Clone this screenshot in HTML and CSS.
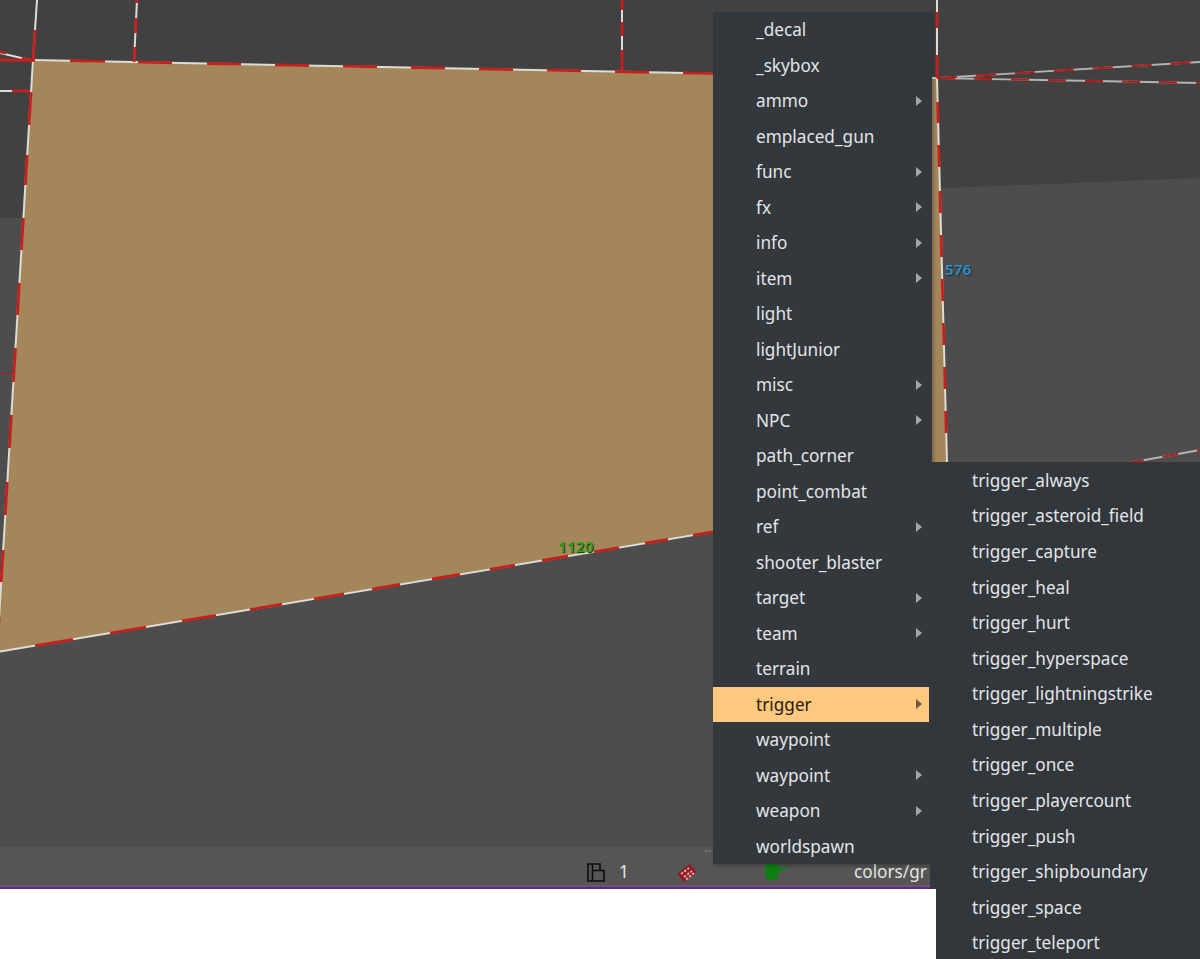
FILE: index.html
```html
<!DOCTYPE html>
<html lang="en">
<head>
<meta charset="utf-8">
<title>Entity menu</title>
<link rel="stylesheet" href="styles.css">
</head>
<body>
<div class="app">
  <div class="viewport">
    <svg class="map" width="1200" height="847" viewBox="0 0 1200 847">
      <rect class="far" width="1200" height="847"/>
      <polygon class="near" points="0,218 25,218 943,188 1200,178 1200,847 0,847"/>
      <polygon class="floor" points="33,60 937,78 947,491 0,651.6 -3,651"/>

      <g class="edge">
        <path d="M33 60L937 78"/>
        <path d="M33 60L-3 651"/>
        <path d="M0 651.6L713 531.8"/>
        <path d="M937 78L947 463"/>
        <path d="M37 0L33 60"/>
        <path d="M137 0L134 62"/>
        <path d="M622 0L622 72"/>
        <path d="M937 0L937 78"/>
        <path d="M0 53L30 60"/>
        <path d="M0 91L30 91"/>
      </g>
      <g class="edge red">
        <path d="M35 60.4L0 60"/>
        <path d="M70 60.7L105 61.4M138 62.1L172 62.8M207 63.5L241 64.1M275 64.8L309 65.5M343 66.2L377 66.8M411 67.5L445 68.2M479 68.9L513 69.6M547 70.2L581 70.9M615 71.6L649 72.3M683 72.9L717 73.6"/>
        <path d="M31.05 92L29.04 125M27.2 155L25.4 185M23.4 218L21.4 250M19.4 283L17.5 315M15.5 348L13.4 382M11.4 415L9.4 448M7.3 482L5.3 515M3.2 550L1.2 582M-.9 617L-2 640"/>
        <path d="M35 645.7L73 639.3M110 633.1L146 627.1M182 621L216 615.3M250 609.6L282 604.2M314 598.8L344 593.8M372 589.1L400 584.4M432 579L460 574.3M490 569.3L515 565.1M542 560.5L568 556.2M594 551.8L619 547.6M645 543.2L668 539.4M693 535.2L713 531.8"/>
        <path d="M937.6 102L938.2 123M938.7 145L939.3 167M939.9 191L940.5 213M941.1 235L941.6 257M942.2 279L942.8 301M943.4 323L943.9 345M944.5 367L945.1 389M945.6 411L946.2 433"/>
        <path d="M35 30L33 60M136.1 18L135.3 33M134.7 47L134 62M137 0L136.9 3"/>
        <path d="M622 0L622 10M622 22L622 36M622 50L622 71"/>
        <path d="M937 12L937 28M937 55L937 78"/>
        <path d="M0 51.8L6 53.2M22 58L33 60.6"/>
        <path d="M12 91L30 91"/>
        <path class="thin" d="M0 373L13 373"/>
      </g>
      <g class="far-edge">
        <path d="M937 78L1200 62"/>
        <path d="M937 78L1200 83"/>
        <path d="M1128 463L1200 450"/>
      </g>
      <g class="far-edge red">
        <path d="M937 78L1200 62" stroke-dasharray="20 19"/>
        <path d="M937 78L1200 83" stroke-dasharray="18 19"/>
        <path d="M1128 463L1200 450" stroke-dasharray="16 19"/>
      </g>
    </svg>
    <span class="measure length-x">1120</span>
    <span class="measure length-y">576</span>
  </div>

  <div class="statusbar">
    <svg class="layer-icon" width="18" height="19" viewBox="0 0 18 19">
      <path d="M1 1H13V7.5H17V18H1ZM5.5 1V18M5.5 7.5H17"/>
    </svg>
    <span class="status-count">1</span>
    <svg class="brush-icon" width="21" height="19" viewBox="0 0 21 19">
      <path class="brush-base" d="M0 10L13 0L20 8L7 18Z"/>
      <path class="brush-grid" d="M4 10L12 4M7 13L15 7M9 15.5L17 9"/>
    </svg>
    <svg class="entity-icon" width="26" height="19" viewBox="0 0 26 19">
      <path class="entity-body" d="M1 0H14L15 6L23 4.5L24 6L15 9L14 14L11 18H4L1 13Z"/>
    </svg>
    <span class="status-texture">colors/gr</span>
  </div>

  <div class="below"></div>

  <span class="grip">··</span>

  <ul class="menu main-menu">
    <li class="item">_decal</li>
    <li class="item">_skybox</li>
    <li class="item sub">ammo</li>
    <li class="item">emplaced_gun</li>
    <li class="item sub">func</li>
    <li class="item sub">fx</li>
    <li class="item sub">info</li>
    <li class="item sub">item</li>
    <li class="item">light</li>
    <li class="item">lightJunior</li>
    <li class="item sub">misc</li>
    <li class="item sub">NPC</li>
    <li class="item">path_corner</li>
    <li class="item">point_combat</li>
    <li class="item sub">ref</li>
    <li class="item">shooter_blaster</li>
    <li class="item sub">target</li>
    <li class="item sub">team</li>
    <li class="item">terrain</li>
    <li class="item sub active">trigger</li>
    <li class="item">waypoint</li>
    <li class="item sub">waypoint</li>
    <li class="item sub">weapon</li>
    <li class="item">worldspawn</li>
  </ul>

  <ul class="menu sub-menu">
    <li class="item">trigger_always</li>
    <li class="item">trigger_asteroid_field</li>
    <li class="item">trigger_capture</li>
    <li class="item">trigger_heal</li>
    <li class="item">trigger_hurt</li>
    <li class="item">trigger_hyperspace</li>
    <li class="item">trigger_lightningstrike</li>
    <li class="item">trigger_multiple</li>
    <li class="item">trigger_once</li>
    <li class="item">trigger_playercount</li>
    <li class="item">trigger_push</li>
    <li class="item">trigger_shipboundary</li>
    <li class="item">trigger_space</li>
    <li class="item">trigger_teleport</li>
  </ul>
</div>
</body>
</html>
```

FILE: styles.css
```css
* { box-sizing: border-box; }

html, body {
  margin: 0;
  height: 100%;
  overflow: hidden;
  background: #fff;
}

.app {
  position: relative;
  display: flex;
  flex-direction: column;
  width: 1200px;
  height: 959px;
  overflow: hidden;
  font-family: "Noto Sans", "Open Sans", sans-serif;
}

/* map canvas */
.viewport {
  position: relative;
  flex: none;
  height: 847px;
  overflow: hidden;
}

.map { display: block; }
.far { fill: #414141; }
.near { fill: #4d4d4d; }
.floor { fill: #a3875a; }

.edge path,
.far-edge path {
  fill: none;
  stroke-linecap: butt;
}

.edge path { stroke: #dedcd4; stroke-width: 2; }
.edge.red path { stroke: #c4201e; stroke-width: 2.8; }
.edge.red path.thin { stroke: #8f2a2a; stroke-width: 1.5; }

.far-edge path { stroke: #b4b4b2; stroke-width: 1.8; }
.far-edge.red path { stroke: #a8201f; stroke-width: 2.2; }

.measure {
  position: absolute;
  font-size: 15px;
  line-height: 16px;
  font-weight: 600;
  letter-spacing: 0.3px;
}

.length-x {
  left: 558px;
  top: 538px;
  color: #2fa51f;
  text-shadow: 1px 1px 1px #14300f;
}

.length-y {
  left: 945px;
  top: 261px;
  color: #2f8fc0;
  text-shadow: 1px 1px 1px #14303f;
}

/* status bar */
.statusbar {
  flex: none;
  display: flex;
  align-items: flex-start;
  height: 42px;
  padding: 0 0 0 587px;
  background: #555654;
  border-bottom: 2px solid #5c2c7e;
  box-shadow: inset 0 -2px 0 #71527f;
  color: #e2e4e4;
  font-size: 17.2px;
  line-height: 24px;
}

.layer-icon { flex: none; margin-top: 16px; }
.layer-icon path { fill: none; stroke: #0c0c0c; stroke-width: 1.6; }

.status-count { margin-left: 14px; width: 10px; margin-top: 13px; }

.brush-icon { flex: none; margin-left: 48px; margin-top: 17px; }
.brush-base { fill: #8e1c24; }
.brush-grid { fill: none; stroke: #e6a8a8; stroke-width: 2; stroke-dasharray: 2.5 1.5; }

.entity-icon { flex: none; margin-left: 66px; margin-top: 15px; }
.entity-body { fill: #0c7f12; }

.status-texture { margin-left: 64px; margin-top: 13px; white-space: nowrap; }

.below {
  position: relative;
  z-index: 3;
  flex: 1;
  width: 936px;
  background: #fff;
}

.grip {
  position: absolute;
  left: 704px;
  top: 846px;
  font-size: 13px;
  line-height: 10px;
  color: #8a8a8a;
}

/* menus */
.menu {
  position: absolute;
  margin: 0;
  list-style: none;
  background: #33383c;
  color: #e3e5e8;
  font-size: 17.2px;
}

.main-menu {
  left: 713px;
  top: 12px;
  z-index: 2;
  width: 219px;
  height: 852px;
  padding: 0 3px 0 0;
  box-shadow: 2px 2px 3px rgba(0, 0, 0, 0.25);
}

.sub-menu {
  left: 930px;
  top: 462px;
  z-index: 2;
  width: 270px;
  height: 497px;
  padding: 0.5px 0 0;
  overflow: hidden;
  background: #32373b;
}

.item {
  position: relative;
  display: flex;
  align-items: center;
  white-space: nowrap;
}

.main-menu .item {
  height: 35.5px;
  padding-left: 43px;
}

.sub-menu .item {
  height: 35.58px;
  padding-left: 42px;
}

.sub::after {
  content: "";
  position: absolute;
  right: 7px;
  top: 50%;
  margin-top: -5px;
  border-style: solid;
  border-width: 5px 0 5px 6px;
  border-color: transparent transparent transparent #a3a7aa;
}

.active {
  background: #fdc97f;
  color: #2b1a10;
}

.active::after {
  border-left-color: #6c5b45;
}
```
